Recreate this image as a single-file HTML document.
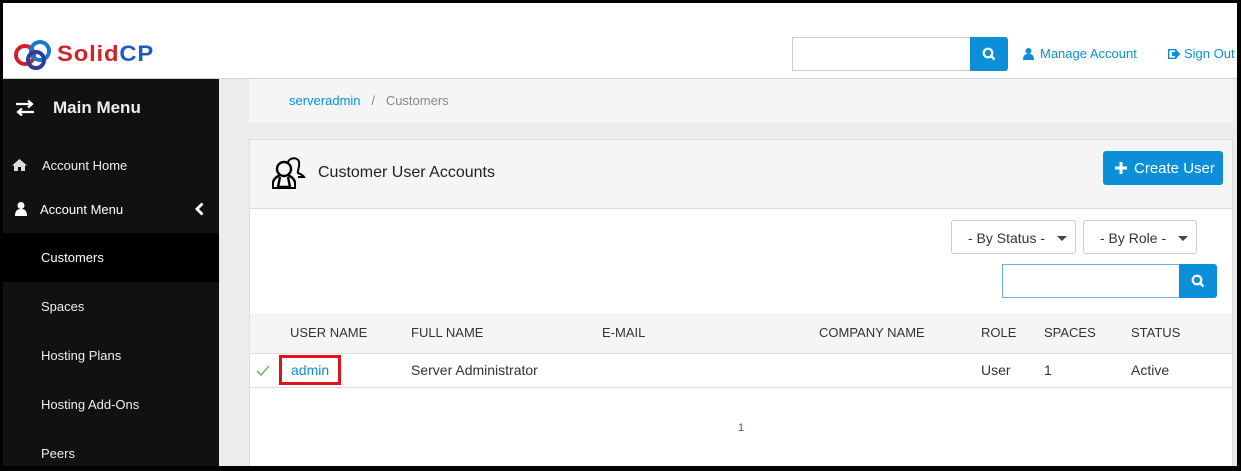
<!DOCTYPE html>
<html><head><meta charset="utf-8"><style>
*{box-sizing:border-box;margin:0;padding:0}
body{width:1241px;height:471px;overflow:hidden;background:#000;font-family:"Liberation Sans",Arial,sans-serif;position:relative}
.page{position:absolute;left:3px;top:3px;width:1234px;height:463px;background:#ececec;overflow:hidden}
.hdr{position:absolute;left:0;top:0;width:1234px;height:76px;background:#fff;border-bottom:1px solid #d2d2d2}
.side{position:absolute;left:0;top:76px;width:216px;height:400px;background:#111;color:#eee;font-size:13px}
.side .it{position:absolute;left:0;width:216px;height:49px;line-height:49px;padding-left:38px}
a{color:#0a8fd8;text-decoration:none}
.abs{position:absolute}
</style></head><body><div class="page">
<div class="hdr">
 <svg class="abs" style="left:10px;top:35px" width="44" height="34" viewBox="0 0 44 34">
  <circle cx="12" cy="17" r="9" fill="none" stroke="#d21f2a" stroke-width="4"/>
  <circle cx="27" cy="13" r="9" fill="none" stroke="#1979c9" stroke-width="4"/>
  <circle cx="23" cy="22" r="8" fill="none" stroke="#2e3d9c" stroke-width="4"/>
 </svg>
 <div class="abs" style="left:54px;top:38px;font-size:22px;font-weight:bold;letter-spacing:0.8px;transform:scaleX(1.08);transform-origin:left"><span style="color:#d21f2a">Solid</span><span style="color:#1e5cbf">CP</span></div>
 <div class="abs" style="left:789px;top:34px;width:178px;height:34px;border:1px solid #ccc;border-right:none"></div>
 <div class="abs" style="left:967px;top:34px;width:38px;height:34px;background:#0a8fd8;border-radius:0 3px 3px 0"><svg style="margin:10px 0 0 12px" width="14" height="14" viewBox="0 0 14 14"><circle cx="6" cy="6" r="4.3" fill="none" stroke="#fff" stroke-width="2.2"/><path d="M9 9l3.5 3.5" stroke="#fff" stroke-width="2.6"/></svg></div>
 <svg class="abs" style="left:1020px;top:45px" width="11" height="12" viewBox="0 0 11 12"><circle cx="5.5" cy="3" r="3" fill="#0a8fd8"/><path d="M0 12c0-5 2-6 5.5-6s5.5 1 5.5 6z" fill="#0a8fd8"/></svg>
 <a class="abs" style="left:1037px;top:43px;font-size:13px">Manage Account</a>
 <svg class="abs" style="left:1165px;top:46px" width="13" height="10" viewBox="0 0 13 10"><rect x="0.7" y="0.7" width="7" height="8.6" fill="none" stroke="#0a8fd8" stroke-width="1.4"/><path d="M4 3h4V0.5l4.5 4.5L8 9.5V7H4z" fill="#0a8fd8"/></svg>
 <a class="abs" style="left:1181px;top:43px;font-size:13px">Sign Out</a>
</div>
<div class="side">
 <div class="abs" style="left:0;top:0;width:216px;height:57px;line-height:57px;font-size:17px;font-weight:bold;padding-left:50px">Main Menu</div>
 <svg class="abs" style="left:12px;top:21px" width="20" height="16" viewBox="0 0 20 16"><path d="M1 4h16M13 0.5l4 3.5-4 3.5M19 12H3M7 8.5l-4 3.5 4 3.5" fill="none" stroke="#fff" stroke-width="2.2"/></svg>
 <svg class="abs" style="left:9px;top:80px" width="15" height="12" viewBox="0 0 15 12"><path d="M7.5 0L0 6.5h2V12h4V8h3v4h4V6.5h2z" fill="#ddd"/></svg>
 <div class="it" style="top:62px;padding-left:39px">Account Home</div>
 <svg class="abs" style="left:12px;top:123px" width="12" height="14" viewBox="0 0 12 14"><circle cx="6" cy="3.5" r="3.5" fill="#fff"/><path d="M0 14c0-5 2-7 6-7s6 2 6 7z" fill="#fff"/></svg>
 <div class="it" style="top:106px;padding-left:37px;color:#fff">Account Menu</div>
 <svg class="abs" style="left:192px;top:123px" width="9" height="14" viewBox="0 0 9 14"><path d="M7.5 1.5L2 7l5.5 5.5" fill="none" stroke="#fff" stroke-width="2.8"/></svg>
 <div class="it" style="top:154px;background:#000;color:#fff">Customers</div>
 <div class="it" style="top:203px">Spaces</div>
 <div class="it" style="top:252px">Hosting Plans</div>
 <div class="it" style="top:301px">Hosting Add-Ons</div>
 <div class="it" style="top:350px">Peers</div>
</div>
<div class="abs" style="left:246px;top:76px;width:984px;height:44px;background:#f5f5f5;font-size:13px;line-height:44px;padding-left:40px;color:#888"><a>serveradmin</a>&nbsp;&nbsp;&nbsp;/&nbsp;&nbsp;&nbsp;Customers</div>
<div class="abs" style="left:246px;top:136px;width:984px;height:340px;background:#fff;border:1px solid #ddd">
 <div class="abs" style="left:0;top:0;width:982px;height:69px;background:#f5f5f5;border-bottom:1px solid #ddd"></div>
 <svg class="abs" style="left:21px;top:16px" width="35" height="34" viewBox="0 0 35 34"><path d="M17 6c2-5 10-5 11 0 1 5-2 9-1 11 2 1 5 2 6 4h-6" fill="none" stroke="#000" stroke-width="2"/><circle cx="13" cy="13" r="7" fill="none" stroke="#000" stroke-width="2.4"/><path d="M2 26c1-4 5-6 7-7M24 26c-1-4-5-6-7-7M9 21l-2 10h12l-2-10" fill="none" stroke="#000" stroke-width="2.4"/><path d="M2 26v6h22v-6" fill="none" stroke="#000" stroke-width="2"/></svg>
 <div class="abs" style="left:68px;top:24px;font-size:16px;color:#222">Customer User Accounts</div>
 <div class="abs" style="left:853px;top:11px;width:120px;height:34px;background:#0a8fd8;border-radius:3px;color:#fff;font-size:15px;line-height:35px;padding-left:31px">Create User</div>
 <svg class="abs" style="left:865px;top:22px" width="12" height="12" viewBox="0 0 12 12"><path d="M6 0v12M0 6h12" stroke="#fff" stroke-width="3"/></svg>
 <div class="abs" style="left:701px;top:80px;width:125px;height:34px;border:1px solid #ccc;border-radius:3px;font-size:14px;line-height:34px;padding-left:16px;color:#333">- By Status -</div>
 <div class="abs" style="left:833px;top:80px;width:114px;height:34px;border:1px solid #ccc;border-radius:3px;font-size:14px;line-height:34px;padding-left:16px;color:#333">- By Role -</div>
 <svg class="abs" style="left:807px;top:96px" width="10" height="5"><path d="M0 0h10L5 5z" fill="#444"/></svg>
 <svg class="abs" style="left:928px;top:96px" width="10" height="5"><path d="M0 0h10L5 5z" fill="#444"/></svg>
 <div class="abs" style="left:752px;top:124px;width:178px;height:34px;border:1px solid #66afe9"></div>
 <div class="abs" style="left:929px;top:124px;width:38px;height:34px;background:#0a8fd8;border-radius:0 3px 3px 0"><svg style="margin:10px 0 0 12px" width="14" height="14" viewBox="0 0 14 14"><circle cx="6" cy="6" r="4.3" fill="none" stroke="#fff" stroke-width="2.2"/><path d="M9 9l3.5 3.5" stroke="#fff" stroke-width="2.6"/></svg></div>
 <div class="abs" style="left:0;top:173px;width:982px;height:41px;background:#f5f5f5;border-bottom:1px solid #ddd;font-size:13px;color:#333;line-height:40px">
  <span class="abs" style="left:40px">USER NAME</span><span class="abs" style="left:161px">FULL NAME</span><span class="abs" style="left:352px">E-MAIL</span><span class="abs" style="left:569px">COMPANY NAME</span><span class="abs" style="left:731px">ROLE</span><span class="abs" style="left:794px">SPACES</span><span class="abs" style="left:881px">STATUS</span>
 </div>
 <div class="abs" style="left:0;top:214px;width:982px;height:34px;border-bottom:1px solid #ddd;font-size:14px;color:#333;line-height:32px">
  <svg class="abs" style="left:6px;top:11px" width="14" height="11" viewBox="0 0 14 11"><path d="M1 6l4 4 8-9" fill="none" stroke="#7bbd4f" stroke-width="1.6"/></svg>
  <div class="abs" style="left:29px;top:1px;width:62px;height:30px;border:3px solid #e0141a;line-height:24px;padding-left:9px"><a>admin</a></div>
  <span class="abs" style="left:161px">Server Administrator</span><span class="abs" style="left:731px">User</span><span class="abs" style="left:794px">1</span><span class="abs" style="left:881px">Active</span>
 </div>
 <a class="abs" style="left:488px;top:282px;font-size:11px;color:#1a5fb4">1</a>
</div>
</div></body></html>
